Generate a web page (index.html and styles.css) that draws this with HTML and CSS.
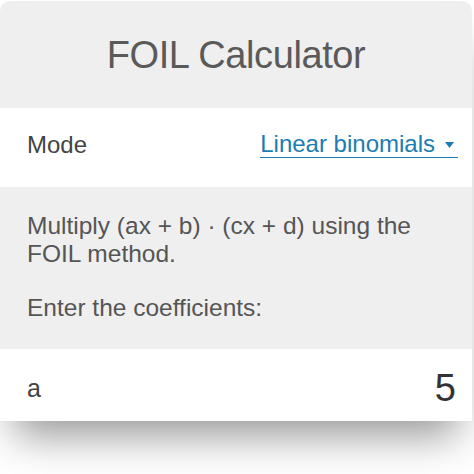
FILE: index.html
```html
<!DOCTYPE html>
<html lang="en">
<head>
    <meta charset="UTF-8">
    <meta name="viewport" content="width=device-width, initial-scale=1.0">
    <title>FOIL Calculator</title>
    <link rel="stylesheet" href="styles.css">
</head>
<body>
<div class="card">
    <div class="header">
        <h1 class="title">FOIL Calculator</h1>
    </div>

    <div class="row modeRow">
        <span class="label">Mode</span>
        <a class="modeLink" href="#">Linear binomials
            <svg class="arrow" width="9" height="6" viewBox="0 0 9 6"><path d="M0 0 H9 L4.5 6 Z" fill="currentColor"/></svg>
        </a>
    </div>

    <div class="desc">
        <p>Multiply (ax + b) · (cx + d) using the FOIL method.</p>
        <p>Enter the coefficients:</p>
    </div>

    <div class="row inputRow">
        <span class="varName">a</span>
        <span class="value">5</span>
    </div>
</div>
</body>
</html>
```

FILE: styles.css
```css
body {
    margin: 0;
    padding: 0 0 53px 0;
    background: white;
    font-family: 'Liberation Sans', Arial, sans-serif;
}

.card {
    position: relative;
    width: 472px;
    margin-top: 1px;
    border-radius: 10px 10px 0 0;
    background-color: white;
    box-shadow: 0 28px 40px -14px rgba(0, 0, 0, 0.42);
}

.header {
    height: 107px;
    padding-top: 1px;
    box-sizing: border-box;
    background-color: #efefef;
    border-radius: 10px 10px 0 0;
    display: flex;
    justify-content: center;
    align-items: center;
}

.title {
    margin: 0;
    font-size: 38px;
    font-weight: normal;
    line-height: 1;
    letter-spacing: -0.4px;
    color: #5a5a5a;
}

.row {
    display: flex;
    justify-content: space-between;
    align-items: center;
    background-color: white;
    padding: 0 16px 0 27px;
}

.modeRow {
    height: 79px;
    padding-bottom: 6px;
    box-sizing: border-box;
    font-size: 24px;
    padding-right: 14px;
}

.label {
    color: #444;
}

.modeLink {
    display: flex;
    align-items: center;
    color: #1c7db2;
    text-decoration: none;
    border-bottom: 1.5px solid #1c7db2;
    line-height: 24px;
    padding-bottom: 1px;
}

.arrow {
    margin-left: 10px;
    margin-right: 4px;
    margin-top: 2px;
}

.desc {
    background-color: #efefef;
    padding: 25px 20px 27px 27px;
    font-size: 24.5px;
    line-height: 28px;
    color: #555;
}

.desc p {
    margin: 0;
}

.desc p + p {
    margin-top: 26px;
}

.inputRow {
    height: 72px;
    padding-top: 6px;
    box-sizing: border-box;
}

.varName {
    font-size: 25px;
    line-height: 1;
    color: #444;
}

.value {
    font-size: 38px;
    line-height: 1;
    color: #333;
}
```
